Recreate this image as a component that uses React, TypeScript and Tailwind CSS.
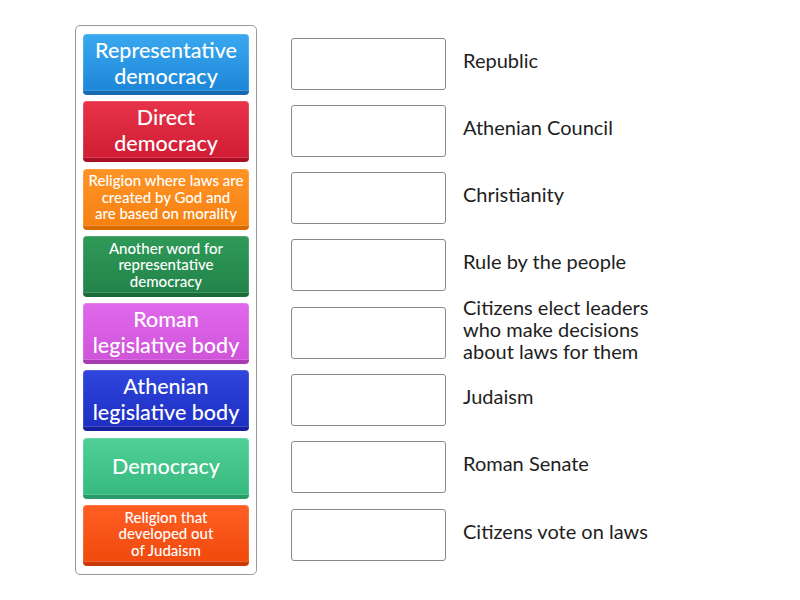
import { Fragment } from 'react'

const tiles = [
  { lines: ['Representative', 'democracy'], big: true, cls: 'from-[#3aa9f0] to-[#1d86d8] border-[#1668b0]' },
  { lines: ['Direct', 'democracy'], big: true, cls: 'from-[#e8334a] to-[#d01c34] border-[#a80f24]' },
  { lines: ['Religion where laws are', 'created by God and', 'are based on morality'], big: false, cls: 'from-[#ff9326] to-[#f6820f] border-[#d86a00]' },
  { lines: ['Another word for', 'representative', 'democracy'], big: false, cls: 'from-[#2f9a58] to-[#23844a] border-[#1b6b3b]' },
  { lines: ['Roman', 'legislative body'], big: true, cls: 'from-[#e068ea] to-[#cf54da] border-[#a63ab2]' },
  { lines: ['Athenian', 'legislative body'], big: true, cls: 'from-[#2f45dc] to-[#1f2fc4] border-[#16219a]' },
  { lines: ['Democracy'], big: true, cls: 'from-[#4fd097] to-[#36b97f] border-[#2a9a69]' },
  { lines: ['Religion that', 'developed out', 'of Judaism'], big: false, cls: 'from-[#ff5e22] to-[#f04a0c] border-[#c93a05]' },
]

const answers = [
  'Republic',
  'Athenian Council',
  'Christianity',
  'Rule by the people',
  'Citizens elect leaders who make decisions about laws for them',
  'Judaism',
  'Roman Senate',
  'Citizens vote on laws',
]

export default function App() {
  return (
    <div className="w-[800px] h-[600px] bg-white font-['Lato',sans-serif] flex items-start pt-[25px] pl-[75px]">
      {/* tiles */}
      <div className="w-[182px] h-[550px] border border-[#9a9a9a] rounded-[5px] px-[7px] pt-[8px] flex flex-col gap-[6.3px]">
        {tiles.map((t) => (
          <div
            key={t.lines.join(' ')}
            className={`h-[61px] rounded-[4px] bg-gradient-to-b border-b-[4px] ${t.cls} flex items-center justify-center text-center text-white whitespace-nowrap shadow-[inset_0_0_0_1px_rgba(255,255,255,0.15)]`}
          >
            <p className={t.big ? 'text-[21.5px] leading-[26px] font-medium' : 'text-[15px] leading-[16.5px] font-medium'}>
              {t.lines.map((l, i) => (
                <Fragment key={l}>
                  {i > 0 && <br />}
                  {l}
                </Fragment>
              ))}
            </p>
          </div>
        ))}
      </div>

      {/* answers */}
      <div className="ml-[34px] pt-[8px] flex flex-col gap-[6.3px]">
        {answers.map((a) => (
          <div key={a} className="h-[61px] flex items-center">
            <div className="w-[155px] h-[52px] border border-[#8a8a8a] rounded-[3px] bg-white shrink-0" />
            <div className="ml-[17px] mb-[8px] w-[210px] text-[20px] leading-[22px] text-[#1e1e1e]">{a}</div>
          </div>
        ))}
      </div>
    </div>
  )
}
